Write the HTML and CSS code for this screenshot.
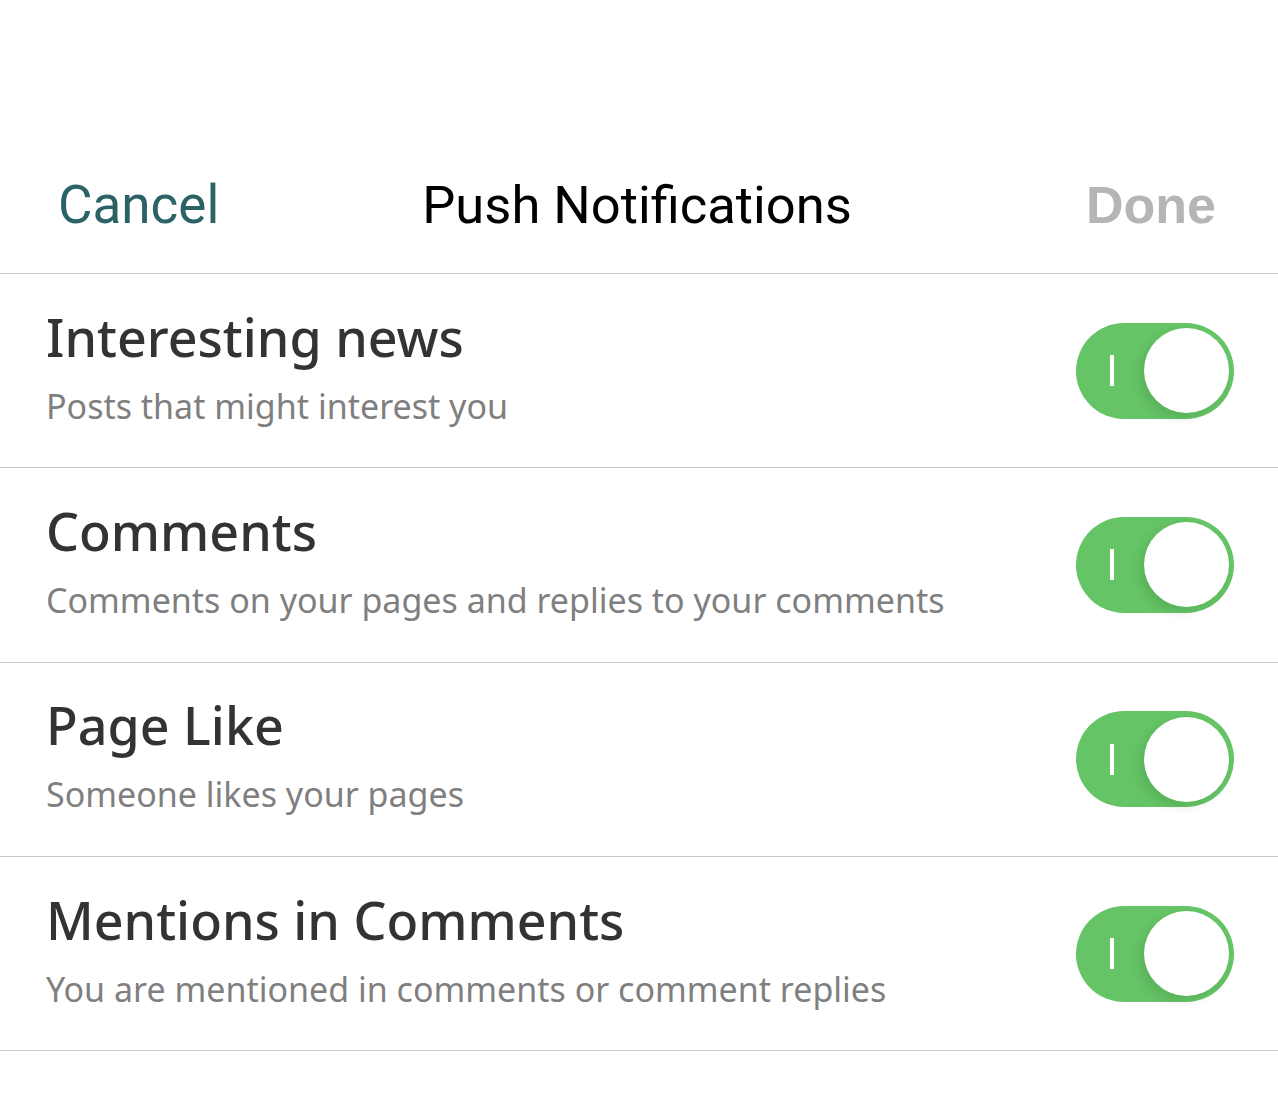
FILE: index.html
```html
<!DOCTYPE html>
<html lang="en">
<head>
  <meta charset="UTF-8">
  <title>Push Notifications</title>
  <meta name="viewport" content="width=device-width, initial-scale=1.0">
  <link rel="stylesheet" href="styles.css">
</head>
<body>
  <header class="nav-bar">
    <span class="nav-cancel">Cancel</span>
    <span class="nav-title">Push Notifications</span>
    <span class="nav-done">Done</span>
  </header>

  <ul class="settings">
    <li class="setting-row">
      <div class="setting-text">
        <div class="setting-title">Interesting news</div>
        <div class="setting-desc">Posts that might interest you</div>
      </div>
      <div class="toggle"><span class="toggle-bar"></span><span class="toggle-knob"></span></div>
    </li>
    <li class="setting-row">
      <div class="setting-text">
        <div class="setting-title">Comments</div>
        <div class="setting-desc">Comments on your pages and replies to your comments</div>
      </div>
      <div class="toggle"><span class="toggle-bar"></span><span class="toggle-knob"></span></div>
    </li>
    <li class="setting-row">
      <div class="setting-text">
        <div class="setting-title">Page Like</div>
        <div class="setting-desc">Someone likes your pages</div>
      </div>
      <div class="toggle"><span class="toggle-bar"></span><span class="toggle-knob"></span></div>
    </li>
    <li class="setting-row">
      <div class="setting-text">
        <div class="setting-title">Mentions in Comments</div>
        <div class="setting-desc">You are mentioned in comments or comment replies</div>
      </div>
      <div class="toggle"><span class="toggle-bar"></span><span class="toggle-knob"></span></div>
    </li>
  </ul>
</body>
</html>
```

FILE: styles.css
```css
:root {
  --teal: #2b6266;
  --green: #65c466;
  --line: #c8c8c8;
  --title: #333333;
  --desc: #7f7f7f;
}

body {
  margin: 0;
  background: #ffffff;
  font-family: "Noto Sans", sans-serif;
}

/* top bar */
.nav-bar {
  height: 113px;
  padding: 160px 62px 0 58px;
  display: flex;
  align-items: center;
  justify-content: space-between;
  border-bottom: 1px solid var(--line);
}

.nav-cancel,
.nav-title {
  font-family: Roboto, sans-serif;
  font-size: 53px;
  margin-top: -24px;
}

.nav-cancel {
  color: var(--teal);
  width: 200px;
}

.nav-title {
  color: #000000;
  font-size: 52.5px;
}

.nav-done {
  font-family: "Liberation Sans", Arial, sans-serif;
  font-weight: bold;
  font-size: 52px;
  color: #b5b5b5;
  width: 200px;
  text-align: right;
  margin-top: -24px;
}

/* list */
.settings {
  list-style: none;
  margin: 0;
  padding: 0;
}

.setting-row {
  height: 193.3px;
  padding: 0 44px 0 46px;
  display: flex;
  align-items: center;
  justify-content: space-between;
  border-bottom: 1px solid var(--line);
}

.setting-text {
  margin-top: -6px;
}

.setting-title {
  font-size: 52px;
  line-height: 64px;
  color: var(--title);
  font-weight: 500;
}

.setting-desc {
  font-size: 34px;
  line-height: 50px;
  color: var(--desc);
  margin-top: 12px;
}

/* switch */
.toggle {
  width: 158px;
  height: 96px;
  box-sizing: border-box;
  border-radius: 48px;
  background: var(--green);
  display: flex;
  align-items: center;
  padding: 0 5px 0 34px;
}

.toggle-bar {
  width: 4px;
  height: 31px;
  background: #ffffff;
}

.toggle-knob {
  margin-left: auto;
  width: 85px;
  height: 85px;
  border-radius: 50%;
  background: #ffffff;
  box-shadow: -5px 5px 10px rgba(0, 60, 0, 0.12);
}
```
